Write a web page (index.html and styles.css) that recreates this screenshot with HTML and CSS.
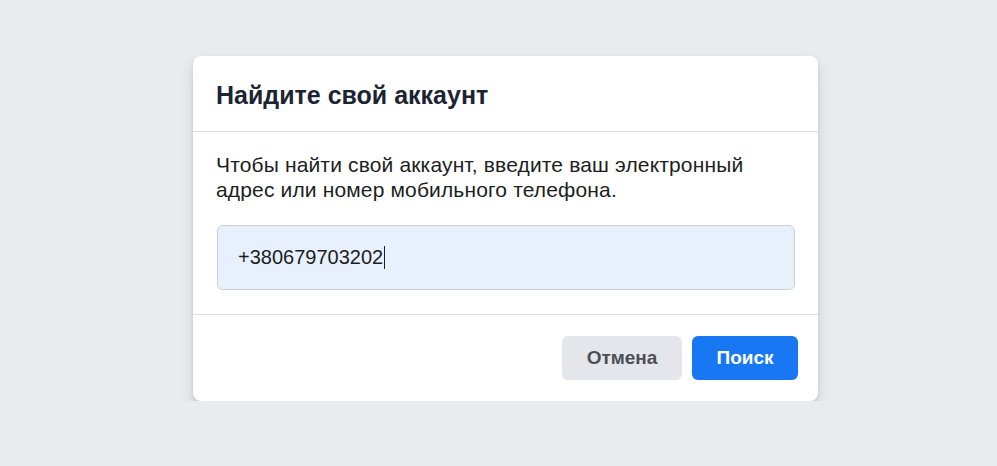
FILE: index.html
```html
<!DOCTYPE html>
<html lang="ru">
<head>
<meta charset="utf-8">
<link rel="stylesheet" href="styles.css">
</head>
<body>
<div class="page">
  <div class="card">
    <div class="card-header">
      <h2 class="title">Найдите свой аккаунт</h2>
    </div>
    <div class="card-body">
      <p class="desc">Чтобы найти свой аккаунт, введите ваш электронный адрес или номер мобильного телефона.</p>
      <div class="field"><span class="value">+380679703202</span><span class="caret"></span></div>
    </div>
    <div class="card-footer">
      <button class="btn btn-cancel">Отмена</button>
      <button class="btn btn-search">Поиск</button>
    </div>
  </div>
</div>
</body>
</html>
```
FILE: styles.css
```css
html, body {
  margin: 0;
  padding: 0;
  background: #e9ebee;
  font-family: "Liberation Sans", Arial, sans-serif;
  color: #1c1e21;
}
.page {
  padding-top: 56px;
  padding-left: 193px;
}
.card {
  width: 625px;
  background: #fff;
  border-radius: 8px;
  box-shadow: 0 2px 4px rgba(0,0,0,.1), 0 8px 16px rgba(0,0,0,.1);
}
.card-header {
  height: 75px;
  display: flex;
  align-items: center;
  padding: 0 23px;
  border-bottom: 1px solid #dddfe2;
}
.title {
  margin: 0;
  font-size: 25px;
  font-weight: bold;
  color: #1c2433;
  line-height: 30px;
  padding-top: 2px;
}
.card-body {
  padding: 20px 23px 24px 23px;
  border-bottom: 1px solid #dddfe2;
}
.desc {
  margin: 0 0 23px 0;
  font-size: 21px;
  line-height: 25px;
  letter-spacing: 0.15px;
  color: #1c1e21;
}
.field {
  height: 63px;
  margin-left: 1px;
  border: 1px solid #ccd0d5;
  border-radius: 6px;
  background: #e8f0fe;
  display: flex;
  align-items: center;
  padding: 0 20px;
  font-size: 20px;
  color: #1c1e21;
}
.caret {
  display: inline-block;
  width: 1px;
  height: 23px;
  background: #1c1e21;
  margin-left: 1px;
}
.card-footer {
  display: flex;
  justify-content: flex-end;
  gap: 10px;
  padding: 21px 20px 21px 0;
}
.btn {
  height: 44px;
  border: none;
  border-radius: 6px;
  font-family: "Liberation Sans", Arial, sans-serif;
  font-size: 19px;
  font-weight: bold;
  padding: 0;
}
.btn-cancel {
  width: 120px;
  background: #e4e6eb;
  color: #4b4f56;
}
.btn-search {
  width: 106px;
  background: #1877f2;
  color: #fff;
}
```
